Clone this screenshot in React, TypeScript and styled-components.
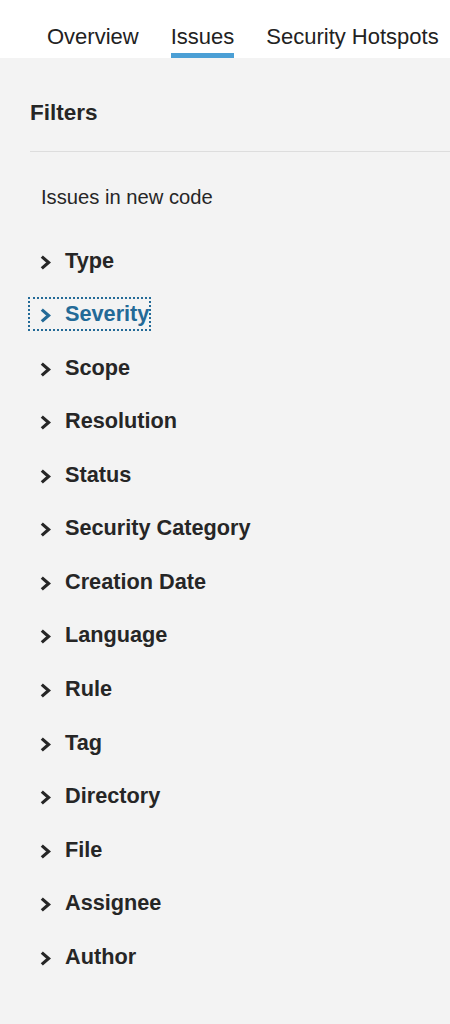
import React from "react";
import styled, { createGlobalStyle } from "styled-components";

const Global = createGlobalStyle`
  html, body { margin: 0; padding: 0; background: #f3f3f3; }
  body { font-family: "Liberation Sans", Arial, Helvetica, sans-serif; color: #262626; }
  * { box-sizing: border-box; }
`;

const Page = styled.div`
  width: 450px;
  min-height: 1024px;
  background: #f3f3f3;
  overflow: hidden;
`;

const Header = styled.nav`
  height: 58px;
  background: #ffffff;
  display: flex;
  align-items: flex-end;
  padding-left: 47px;
  gap: 32px;
  white-space: nowrap;
`;

const Tab = styled.a<{ $active?: boolean }>`
  display: block;
  font-size: 22px;
  line-height: 25px;
  color: #222222;
  padding-bottom: 4px;
  border-bottom: 5px solid ${(p) => (p.$active ? "#4b9fd5" : "transparent")};
  text-decoration: none;
`;

const Sidebar = styled.aside`
  padding-left: 30px;
  padding-top: 41px;
  display: flex;
  flex-direction: column;
`;

const Title = styled.h3`
  margin: 0;
  font-size: 22.5px;
  line-height: 27px;
  font-weight: 700;
  color: #262626;
`;

const Divider = styled.hr`
  margin: 25px 0 0 0;
  border: none;
  height: 1px;
  background: #dddddd;
`;

const NewCode = styled.div`
  margin-top: 33px;
  padding-left: 11px;
  font-size: 20.2px;
  line-height: 24px;
  color: #262626;
`;

const FacetList = styled.div`
  margin-top: 25px;
  display: flex;
  flex-direction: column;
`;

const FacetRow = styled.div`
  height: 53.54px;
  display: flex;
  align-items: center;
`;

const FacetButton = styled.button<{ $focused?: boolean }>`
  display: inline-flex;
  align-items: center;
  gap: 14px;
  height: 34px;
  padding: 0 0 0 10px;
  margin: 0 0 0 -2px;
  background: none;
  border: 2px dotted ${(p) => (p.$focused ? "#236a97" : "transparent")};
  font-family: "Liberation Sans", Arial, Helvetica, sans-serif;
  font-size: 21.7px;
  font-weight: 700;
  color: ${(p) => (p.$focused ? "#236a97" : "#262626")};
  cursor: pointer;
  white-space: nowrap;
`;

const Chevron = ({ color }: { color: string }) => (
  <svg width="11" height="15" viewBox="0 0 11 15" style={{ flexShrink: 0, marginTop: 3 }}>
    <path d="M1.8 1.6 L8.6 7.5 L1.8 13.4" fill="none" stroke={color} strokeWidth="3.2" strokeLinejoin="miter" />
  </svg>
);

const facets = [
  "Type",
  "Severity",
  "Scope",
  "Resolution",
  "Status",
  "Security Category",
  "Creation Date",
  "Language",
  "Rule",
  "Tag",
  "Directory",
  "File",
  "Assignee",
  "Author",
];

export default function App() {
  return (
    <Page>
      <Global />
      <Header>
        <Tab>Overview</Tab>
        <Tab $active>Issues</Tab>
        <Tab>Security Hotspots</Tab>
      </Header>
      <Sidebar>
        <Title>Filters</Title>
        <Divider />
        <NewCode>Issues in new code</NewCode>
        <FacetList>
          {facets.map((f) => {
            const focused = f === "Severity";
            return (
              <FacetRow key={f}>
                <FacetButton $focused={focused}>
                  <Chevron color={focused ? "#236a97" : "#262626"} />
                  {f}
                </FacetButton>
              </FacetRow>
            );
          })}
        </FacetList>
      </Sidebar>
    </Page>
  );
}
